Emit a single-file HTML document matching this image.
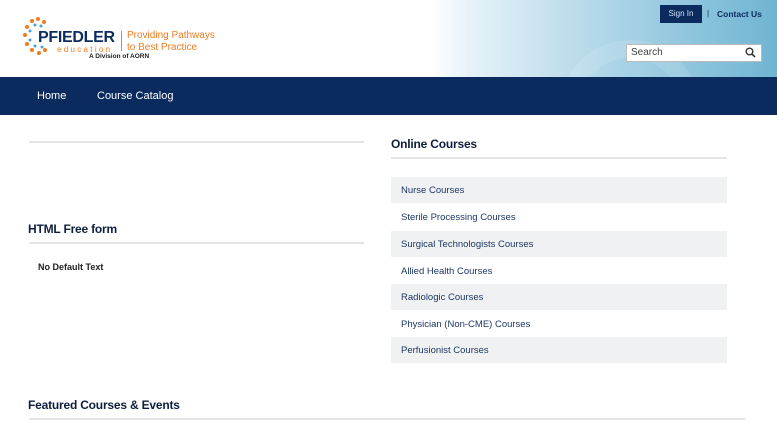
<!DOCTYPE html>
<html><head><style>
*{margin:0;padding:0;box-sizing:border-box}
body{width:777px;height:423px;overflow:hidden;background:#fff;font-family:"Liberation Sans",sans-serif;position:relative}
.a{position:absolute}
.hdr{left:0;top:0;width:777px;height:77px;background:linear-gradient(90deg,#fff 0,#fff 430px,#e6f2f8 470px,#a9d3e6 620px,#6fb4d2 777px)}
.nav{left:0;top:77px;width:777px;height:38px;background:#0b2b5e}
.nav span{position:absolute;top:13px;color:#fff;font-size:11px}
h3{position:absolute;font-size:12px;font-weight:bold;color:#0d1f3c;letter-spacing:-0.2px}
.line{position:absolute;height:2px;background:#e3e5e8}
.row{position:absolute;left:391px;width:336px;height:26px;font-size:9.5px;color:#1d3763;padding:8px 0 0 10px}
.g{background:#f0f1f2}
</style></head><body>
<div class="a hdr"></div>
<div class="a" style="left:560px;top:40px;width:140px;height:140px;border-radius:50%;border:18px solid rgba(255,255,255,0.12)"></div>
<svg class="a" style="left:22px;top:17px" width="32" height="40" viewBox="0 0 32 40">
<g fill="#f07c22"><circle cx="10" cy="4" r="2"/><circle cx="16" cy="2" r="2"/><circle cx="22" cy="5" r="2"/><circle cx="5" cy="10" r="2"/><circle cx="3" cy="18" r="2"/><circle cx="5" cy="27" r="2"/><circle cx="10" cy="33" r="2"/><circle cx="17" cy="36" r="2"/><circle cx="23" cy="33" r="2"/></g>
<g fill="#4aa3df"><circle cx="13" cy="8" r="1.5"/><circle cx="8" cy="14" r="1.5"/><circle cx="8" cy="23" r="1.5"/><circle cx="13" cy="29" r="1.5"/><circle cx="19" cy="9" r="1.5"/><circle cx="20" cy="30" r="1.5"/></g>
</svg>
<div class="a" style="left:38px;top:29px;font-size:16px;font-weight:bold;color:#0d2c5e;letter-spacing:-0.3px">PFIEDLER</div>
<div class="a" style="left:57px;top:45px;font-size:8px;color:#f07c22;letter-spacing:2.3px">education</div>
<div class="a" style="left:89px;top:53px;font-size:6.5px;font-weight:bold;color:#222">A Division of AORN</div>
<div class="a" style="left:121px;top:31px;width:1px;height:20px;background:#f07c22"></div>
<div class="a" style="left:127px;top:30px;font-size:10px;color:#f07c22;line-height:12px">Providing Pathways<br>to Best Practice</div>
<div class="a" style="left:660px;top:5px;width:42px;height:18px;background:#0b2b5e;color:#cfe0f5;font-size:8px;text-align:center;line-height:18px">Sign In</div>
<div class="a" style="left:707px;top:9px;font-size:8px;color:#0b2b5e">|</div>
<div class="a" style="left:717px;top:9px;font-size:8.5px;font-weight:bold;color:#0b2b5e">Contact Us</div>
<div class="a" style="left:626px;top:44px;width:136px;height:18px;background:#fff;border:1px solid #bbb;font-size:10px;color:#444;padding:2px 0 0 4px">Search</div>
<svg class="a" style="left:745px;top:47px" width="11" height="11" viewBox="0 0 11 11"><circle cx="4.5" cy="4.5" r="3.3" fill="none" stroke="#333" stroke-width="1.4"/><path d="M7 7l3 3" stroke="#333" stroke-width="1.6"/></svg>
<div class="a nav"><span style="left:37px">Home</span><span style="left:97px">Course Catalog</span></div>
<div class="line" style="left:29px;top:141px;width:335px"></div>
<h3 style="left:28px;top:222px">HTML Free form</h3>
<div class="line" style="left:29px;top:242px;width:335px"></div>
<div class="a" style="left:38px;top:262px;font-size:9px;font-weight:bold;color:#222">No Default Text</div>
<h3 style="left:391px;top:137px">Online Courses</h3>
<div class="line" style="left:391px;top:157px;width:336px"></div>
<div class="row g" style="top:177px">Nurse Courses</div>
<div class="row" style="top:204px">Sterile Processing Courses</div>
<div class="row g" style="top:231px">Surgical Technologists Courses</div>
<div class="row" style="top:258px">Allied Health Courses</div>
<div class="row g" style="top:284px">Radiologic Courses</div>
<div class="row" style="top:311px">Physician (Non-CME) Courses</div>
<div class="row g" style="top:337px">Perfusionist Courses</div>
<h3 style="left:28px;top:398px">Featured Courses &amp; Events</h3>
<div class="line" style="left:29px;top:418px;width:716px"></div>
</body></html>
